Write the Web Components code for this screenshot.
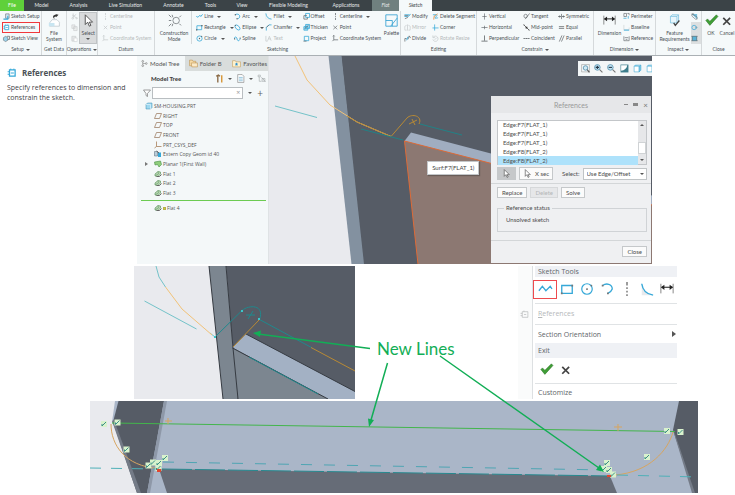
<!DOCTYPE html>
<html lang="en">
<head>
<meta charset="utf-8">
<title>Sketch references</title>
<style>
  body { margin: 0; background: #fff; color: #4c5257; font-family: "Open Sans", "Noto Sans", sans-serif; }
</style>
</head>
<body>
<cad-guide></cad-guide>
<script>
const B = '#35a8d8', G = '#5a6064', L = '#c4c8ca';
const st = (c, w = 1.6) => `fill="none" stroke="${c}" stroke-width="${w}"`;
const leaf = `<path d="M2 8L8 3l5 1v4l-5 5-6-1z" fill="#b9d8b4" stroke="#5b8f5c" stroke-width="1.3"/><path d="M5 13h6l4-4" ${st('#666', 2)}/><path d="M8 3l1 5-6 3" ${st('#5b8f5c', 1)}/>`;
const plane = `<path d="M5 3h10l-4 10H1z" ${st('#9b7b60', 1.5)}/>`;
const pages = `<path d="M2 2h7v8H2zM6 6h8v9H6z" fill="#eceeee" stroke="${L}" stroke-width="1.3"/>`;
const cursor = `<path d="M4 1v12l3-3 2 5 2-1-2-4h4z" fill="#fff" stroke="#555" stroke-width="1.2"/>`;
const ICONS = {
  setup: `<path d="M6 2h8v10H6z" fill="#d6edf7" stroke="${G}" stroke-width="1.3"/><path d="M1 14h10V6" ${st(B, 2.4)}/>`,
  refs: `<path d="M4 3h9v10H4z" fill="#fff" stroke="${B}" stroke-width="2"/><path d="M1 6h3M1 10h3M6 1v2M11 1v2M6 8h5" ${st(B)}/>`,
  view: `<path d="M1 6l5-3 5 3v6l-5 3-5-3z" fill="#9bd3ec" stroke="${G}" stroke-width="1.2"/><path d="M9 3h6v7h-4" ${st(G)}/>`,
  file: `<path d="M5 7h6l3 3v5H2v-4z" fill="#fff" stroke="#a9b5bb" stroke-width=".7"/><path d="M1 11h7v4H1z" fill="#c8e5f1"/><path d="M8 6C5 4 6 1 10 1L9 0l4 1-3 3V3C8 3 7 4 8 6z" fill="#333"/>`,
  cut: `<path d="M5 1v9M3 5l9 6M12 3L5 8" ${st(L)}/><circle cx="4" cy="12" r="2" ${st(L)}/><circle cx="13" cy="12" r="1.6" ${st(L)}/>`,
  copy: pages,
  paste: `<path d="M2 3h9v11H2z" fill="#e4e6e7" stroke="${L}" stroke-width="1.3"/><path d="M7 7h7v8H7z" fill="#fff" stroke="${L}"/>`,
  cursor,
  centerOff: `<path d="M8 0v5M8 7v2M8 11v5" ${st(L)}/>`,
  center: `<path d="M8 0v5M8 7v2M8 11v5" ${st(G)}/>`,
  pointOff: `<path d="M4 4l8 8M12 4l-8 8" ${st(L)}/>`,
  point: `<path d="M3 4l9 8M12 4l-9 8" ${st(G, 1.4)}/>`,
  csysOff: `<path d="M4 1v10h10M1 14l3-3M2 3l2-2 2 2" ${st(L)}/>`,
  csys: `<path d="M4 1v10h10M1 14l3-3M2 3l2-2 2 2" ${st(G)}/>`,
  construct: `<circle cx="10" cy="8" r="4" ${st(G, .8)}/><path d="M1 1l3 3M1 8h3M1 15l3-3M5 1l1 3M5 15l1-3M14 4l2-2M14 12l2 2" ${st(G, .9)}/>`,
  line: `<path d="M1 7c2 4 4 3 6 0s3-1 4 1l4-5" ${st(B, 2)}/>`,
  rect: `<path d="M2 4h11v9H2z" ${st(B, 1.8)}/><path d="M0 12h3v3H0zM12 2h3v3h-3z" fill="${G}"/>`,
  circle: `<circle cx="8" cy="8" r="6" ${st(B, 1.8)}/><circle cx="8" cy="8" r="1.5" fill="${G}"/><circle cx="13" cy="3" r="1.4" fill="${G}"/>`,
  arc: `<path d="M3 4c4-3 11-1 10 5-1 3-3 4-5 4" ${st(B, 2)}/><circle cx="3" cy="4" r="1.6" fill="${G}"/><circle cx="7" cy="13" r="1.6" fill="${G}"/>`,
  ellipse: `<ellipse cx="8" cy="8" rx="7" ry="4" transform="rotate(45 8 8)" ${st(B, 1.8)}/><circle cx="3" cy="3" r="1.4" fill="${G}"/>`,
  spline: `<path d="M1 9c0-6 5-6 6 0s6 5 7-1" ${st(B, 2)}/><circle cx="1.500" cy="9" r="1.5" fill="${G}"/><circle cx="14" cy="7" r="1.5" fill="${G}"/>`,
  fillet: `<path d="M2 1v13h12" ${st('#dde1e3', 1)}/><path d="M2 1c1 8 5 12 13 13" ${st(B, 1.8)}/>`,
  chamfer: `<path d="M3 15V8l6-6h6" ${st(B, 1.8)}/><path d="M3 8L9 2" ${st(G)}/>`,
  textOff: `<path d="M2 2v12h4M6 13l4-10 4 10M8 9h5" ${st(L)}/>`,
  offset: `<path d="M6 1h9v9H6z" ${st(B, 1.8)}/><path d="M9 6H2v8h8v-4" ${st(G)}/>`,
  thicken: `<path d="M6 1h9v9H6zM2 6h9v8H2z" fill="#a9dbf0" stroke="${B}" stroke-width="1.8"/><path d="M4 11l8-8" ${st(G)}/>`,
  project: `<path d="M3 3h10v10H3z" ${st(B, 1.8)}/><path d="M1 14h7" ${st(G)}/>`,
  palette: `<path d="M1 1h14v14H1zM1 8h8V15M7 15L15 5" ${st('#2f9fd2', 1)}/>`,
  modify: `<path d="M1 4h12M1 8h7c5 0 5-5 7-5" ${st(B, 1.8)}/><path d="M2 13l7-3M1 6h9" ${st(G)}/>`,
  mirrorOff: `<path d="M8 1v14M6 3c-6 1-4 6-4 11h4M10 3c6 1 4 6 4 11h-4" ${st(L)}/>`,
  divide: `<path d="M2 15V8h4M9 10l3-8 3 5" ${st(G)}/><path d="M6 12l3-8" ${st(B, 2)}/>`,
  del: `<path d="M4 15l1-8 8-5" ${st('#e58a3c', 2)}/><path d="M2 4h8M7 12l7-1M12 5l-5 6" ${st(B, 1.8)}/>`,
  corner: `<path d="M6 1v14M1 9h14" ${st(B, 1.7)}/>`,
  rotateOff: `<path d="M3 5a6 6 0 1 1-1 5M2 1v5h5M6 11l5-5" ${st(L)}/>`,
  vert: `<path d="M8 1v14M3 8h10" ${st(G, 1.4)}/>`,
  horiz: `<path d="M1 8h14M8 4v8" ${st(G, 1.4)}/>`,
  perp: `<path d="M8 1v12M1 14h14" ${st(G, 1.8)}/>`,
  tangent: `<circle cx="6" cy="7" r="4" ${st(G, 1.4)}/><path d="M5 14L15 1" ${st(G, 1.5)}/>`,
  mid: `<path d="M2 2l12 12" ${st('#333', 1.6)}/><path d="M6 6h4v4H6zM1 1h2v2H1zM13 13h2v2h-2z" fill="#333"/>`,
  coin: `<path d="M1 8h5M10 8h5" ${st(G, 1.8)}/><circle cx="8" cy="8" r="1.400" fill="${G}"/>`,
  sym: `<path d="M8 2v12M0 8h5M11 8h5" ${st(G, 1.5)}/><path d="M3 5l4 3-4 3zM13 5L9 8l4 3z" fill="${G}"/>`,
  equal: `<path d="M2 6h12M2 10h12" ${st(G, 1.7)}/>`,
  parallel: `<path d="M3 15L9 1M8 15l6-14" ${st(G, 1.6)}/>`,
  dim: `<path d="M1 2v11M15 2v11" ${st('#555', .8)}/><path d="M2 6h12" ${st('#222', 1.2)}/><path d="M5 3v6L1 6zM11 3v6l4-3z" fill="#222"/>`,
  perim: `<path d="M2 1h6v7H2zM10 1h4v4" ${st(G, 1.4)}/><path d="M1 12h7M12 7v6" ${st(B, 1.7)}/>`,
  base: `<path d="M2 2v11h12V8" ${st(L, 1.2)}/><path d="M2 14h12" ${st(B, 2)}/>`,
  refdim: `<path d="M2 3v10h12V3M4 6h8M6 10h4" ${st(G, 1.4)}/>`,
  feature: `<path d="M3 3h8v8H3zM3 3l2-2h8l-2 2M13 1v8l-2 2" fill="#e8f6fc" stroke="#68b9dc" stroke-width=".8"/><path d="M7 11l2 3 5-6" ${st('#444', 1.6)}/>`,
  shade: `<path d="M2 2h12v12z" fill="#7ec3df"/><path d="M2 2h5M2 2v5l8 7h4V9z" ${st(G, 1.2)}/>`,
  ends: `<circle cx="7" cy="8" r="5" ${st(B, 1.6)}/><path d="M10 8h5M12 5v6" ${st('#6f9fb7', 1.4)}/>`,
  loops: `<path d="M3 3h10v10H3z" fill="#5bb2d6" stroke="#48646f" stroke-width="1.500"/><path d="M1 3h2M13 3h2M1 13h2M13 13h2" ${st(G)}/>`,
  ok: `<path d="M1 8l2-2 3 3 8-8 2 2L6 14z" fill="#3f9e36" stroke="#2b6e28" stroke-width=".6"/>`,
  cancel: `<path d="M2 3l11 11M13 3L2 14" ${st('#444', 2.8)}/>`,
  tree: `<circle cx="4" cy="3" r="2" ${st('#777', 1.4)}/><circle cx="4" cy="13" r="2" ${st('#777', 1.4)}/><path d="M4 5v6M4 8h6" ${st('#777', 1.2)}/><circle cx="12" cy="8" r="2" ${st('#777', 1.4)}/>`,
  folder: `<path d="M1 2h5l1 2h5v8H1z" fill="#f8dca8" stroke="#b98c4a"/><path d="M4 7h11v7H5z" fill="#fbeac8" stroke="#b98c4a"/>`,
  fav: `<path d="M1 3h5l1 2h8v9H1z" fill="#fff3cf" stroke="#c09a55"/><path d="M8 6l1 2 2 .3-1.500 1.500.5 2.200-2-1-2 1 .5-2.200L5 8.300 7 8z" fill="#2b8fd0"/>`,
  tools: `<path d="M2 4l4-2 3 2M5 3v12" ${st('#8a6a45', 2.4)}/><path d="M12 2v5M12 7v8" ${st('#d5922f', 2.4)}/>`,
  sheet: `<path d="M3 1h8l3 3v11H3z" fill="#fff" stroke="#777"/><path d="M5 6h7M5 9h7M5 12h7" ${st('#4b9cc4', 1)}/>`,
  treeoff: `<path d="M2 2h4v3H2zM4 5v8h4M9 8h5v5H9z" ${st('#a9aeb0', 1.2)}/><path d="M8 6l7 8" ${st('#a9aeb0')}/>`,
  funnel: `<path d="M1 2h14L9 9v6l-3-2V9z" fill="#fff" stroke="#777" stroke-width="1.400"/>`,
  part: `<path d="M2 5l3-3h9v9l-3 3H2z" fill="#9ed8f0" stroke="#3a8db3"/><path d="M2 5h9v9" ${st('#e8f7fd', 1.2)}/>`,
  plane, leaf,
  tcsys: `<path d="M5 1v10h10M1 14l4-3" ${st('#a47a52', 1.5)}/>`,
  extern: `<path d="M1 3h6v9H1z" fill="#b9cdd8" stroke="#567"/><path d="M8 5h6v9H8z" fill="#35a8d8"/><path d="M5 2l5 4" ${st('#444')}/>`,
  planar: `<path d="M1 4l12-2 2 7-5 5-3-5-5 1z" fill="#8fce7c" stroke="#468d45" stroke-width="1.2"/>`,
  zoomfit: `<path d="M1 1h14v13H1z" ${st('#999', 1)}/><circle cx="8" cy="7" r="4" fill="#cfe9f5" stroke="#4f8ba8" stroke-width="1.400"/><path d="M11 10l4 5" ${st('#555', 2)}/>`,
  zoomin: `<circle cx="6" cy="6" r="5" fill="#bfe2f2" stroke="#4f8ba8" stroke-width="1.3"/><path d="M10 10l5 5" ${st('#777', 2)}/><path d="M3 6h6M6 3v6" ${st('#234', 1.8)}/>`,
  zoomout: `<circle cx="6" cy="6" r="5" fill="#bfe2f2" stroke="#4f8ba8" stroke-width="1.3"/><path d="M10 10l5 5" ${st('#777', 2)}/><path d="M3 6h6" ${st('#234', 1.8)}/>`,
  repaint: `<path d="M1 1h14v14H1z" fill="#3d7d8c"/><path d="M2 2h11C12 8 8 11 2 12z" fill="#fff"/>`,
  cube: `<path d="M2 4h9v10H2z" fill="#fff" stroke="#3aa5d3"/><path d="M2 4l2-2h10v9l-3 3V4l3-2" fill="#7cc9e8" stroke="#3aa5d3"/>`,
  zig: `<path d="M1 10l4-5 4 5 5-5 2 3" ${st('#35a8d8', 1.5)}/>`,
  mrect: `<path d="M2 4h12v9H2z" ${st(B, 1.500)}/><path d="M1 12h2v2H1zM13 3h2v2h-2z" fill="#777"/>`,
  mcircle: `<circle cx="8" cy="8" r="6" ${st(B, 1.400)}/><circle cx="8" cy="8" r="1" fill="#555"/><circle cx="13" cy="4" r="1" fill="#777"/>`,
  marc: `<path d="M3 4c4-3 11-2 11 4-1 3-3 4-5 5" ${st(B, 1.500)}/><path d="M2 3h2v2H2zM8 12h2v2H8z" fill="#777"/>`,
  mcenter: `<path d="M8 0v4M8 6v2M8 10v2M8 14v2" ${st('#444', 1.2)}/>`,
  mfillet: `<path d="M2 2v13h12C7 13 3 9 2 2z" fill="#e8eaed"/><path d="M2 2c1 7 5 12 13 13" ${st(B, 1.600)}/>`,
  greyref: `<path d="M4 3h10v10H4zM1 6h3M1 10h3M7 1v2M7 8h4" ${st('#b3b6b8', 1.2)}/>`,
};

const define = (name, html, init) => customElements.define(name, class extends HTMLElement {
  connectedCallback() {
    if (this.shadowRoot) return;
    const root = this.attachShadow({ mode: 'open' });
    const t = document.createElement('template');
    t.innerHTML = typeof html === 'function' ? html(this) : html;
    root.append(t.content.cloneNode(true));
    if (init) init(this, root);
  }
});
const BTN = `button{font:inherit;color:inherit;background:none;border:0;padding:0;margin:0;text-align:left;white-space:nowrap}`;

define('cad-icon', el => `<style>:host{display:block;flex:none;width:var(--size,7px);height:var(--size,7px)}svg{display:block;width:100%;height:100%;overflow:visible}</style>
<svg viewBox="0 0 16 16" aria-hidden="true">${ICONS[el.getAttribute('name')]}</svg>`);

define('cad-caret', `<style>:host{display:block;flex:none;border:solid transparent;border-width:2px 2px 0;border-top-color:#555;height:0;width:0}</style>`);

define('cad-tool', el => `<style>:host{display:flex;align-items:center;min-width:0;height:11px}${BTN}
button{display:flex;align-items:center;gap:1px;height:11px;line-height:11px}
cad-caret{margin-left:3px}
:host([off]){color:#b5b9bb}
:host([marked]) button{outline:1px solid #f0383c;width:38px;outline-offset:-1px;padding-left:1px;margin-left:-1px}
:host([on]){background:#dcdfe0}</style>
<button type="button" ${el.hasAttribute('off') ? 'disabled' : ''} aria-label="${el.getAttribute('tip') || ''}"><cad-icon name="${el.getAttribute('icon')}"></cad-icon><span><slot></slot></span>${el.hasAttribute('menu') ? '<cad-caret></cad-caret>' : ''}</button>`,
(el, r) => { const b = r.querySelector('button'); if (!b.getAttribute('aria-label')) b.removeAttribute('aria-label'); });

define('cad-big', el => `<style>:host{display:block;--size:13px}${BTN}
button{display:flex;flex-direction:column;align-items:center;width:100%;height:32px;margin-top:1px;padding-top:2px;line-height:6px;text-align:center;white-space:normal}
.glyph{display:grid;place-items:center;height:13px;margin-bottom:3px}
:host([on]) button{background:#d9dbdc;outline:1px solid #bfc3c5;outline-offset:-1px}
cad-caret{margin-top:2px}</style>
<button type="button"><span class="glyph"><cad-icon name="${el.getAttribute('icon')}"></cad-icon></span><span><slot></slot></span>${el.hasAttribute('menu') ? '<cad-caret></cad-caret>' : ''}</button>`);

define('cad-group', el => `<style>:host{display:flex;flex-direction:column;min-width:0;border-right:1px solid #d5d9db;box-sizing:border-box}
:host(:last-child){border-right:0}
.body{display:grid;grid-template-columns:${el.getAttribute('cols')};height:33px;padding-left:${el.getAttribute('pad') || 2}px}
.name{display:flex;justify-content:center;align-items:center;gap:2px;height:11px;line-height:11px}
::slotted(div){min-width:0}
::slotted(.rule){border-left:1px solid #d5d9db;padding-left:4px}</style>
<div class="body"><slot></slot></div><div class="name">${el.getAttribute('name')}${el.hasAttribute('menu') ? '<cad-caret></cad-caret>' : ''}</div>`);

const T = (icon, text, flags = '') => `<cad-tool icon="${icon}" ${flags}>${text}</cad-tool>`;
define('cad-ribbon', `<style>
:host{display:block;font-family:Lato,"Open Sans",sans-serif;font-size:5px;border-bottom:1px solid #aab0b4;overflow:hidden}
nav{display:grid;grid-template-columns:24fr 35fr 39fr 55fr 41fr 33fr 30fr 63fr 52fr 27fr 33fr 303fr;background:#3b4347}
${BTN}
nav button{color:#e6e9ea;text-align:center;height:11px;line-height:11px}
nav .file{background:#5fd03a;color:#fff}
nav .flat{background:#70807f;font-style:italic}
nav .sel{background:#f5f9fa;color:#3b4347;font-style:italic}
main{display:grid;grid-template-columns:42fr 25fr 31fr 57fr 246fr 76fr 117fr 62fr 46fr 33fr;background:#f5f9fa}
main>*{min-width:0}
</style>
<nav><button class="file">File</button><button>Model</button><button>Analysis</button><button>Live Simulation</button><button>Annotate</button><button>Tools</button><button>View</button><button>Flexible Modeling</button><button>Applications</button><button class="flat">Flat</button><button class="sel">Sketch</button></nav>
<main>
<cad-group name="Setup" menu cols="1fr" pad="3"><div>${T('setup', 'Sketch Setup')}${T('refs', 'References', 'marked')}${T('view', 'Sketch View')}</div></cad-group>
<cad-group name="Get Data" cols="1fr" pad="0"><cad-big icon="file">File<br>System</cad-big></cad-group>
<cad-group name="Operations" menu cols="8fr 17fr" pad="4"><div>${T('cut', '', 'off tip="Cut"')}${T('copy', '', 'off tip="Copy"')}${T('paste', '', 'off tip="Paste"')}</div><cad-big icon="cursor" on menu>Select</cad-big></cad-group>
<cad-group name="Datum" cols="1fr" pad="4"><div>${T('centerOff', 'Centerline', 'off')}${T('pointOff', 'Point', 'off')}${T('csysOff', 'Coordinate System', 'off')}</div></cad-group>
<cad-group name="Sketching" cols="34fr 43fr 31fr 37fr 29fr 51fr 17fr"><cad-big icon="construct">Construction<br>Mode</cad-big>
<div class="rule">${T('line', 'Line', 'menu')}${T('rect', 'Rectangle', 'menu')}${T('circle', 'Circle', 'menu')}</div>
<div>${T('arc', 'Arc', 'menu')}${T('ellipse', 'Ellipse', 'menu')}${T('spline', 'Spline')}</div>
<div>${T('fillet', 'Fillet', 'menu')}${T('chamfer', 'Chamfer', 'menu')}${T('textOff', 'Text', 'off')}</div>
<div>${T('offset', 'Offset')}${T('thicken', 'Thicken')}${T('project', 'Project')}</div>
<div>${T('center', 'Centerline', 'menu')}${T('point', 'Point')}${T('csys', 'Coordinate System')}</div>
<cad-big icon="palette">Palette</cad-big></cad-group>
<cad-group name="Editing" cols="28fr 44fr" pad="3"><div>${T('modify', 'Modify')}${T('mirrorOff', 'Mirror', 'off')}${T('divide', 'Divide')}</div><div>${T('del', 'Delete Segment')}${T('corner', 'Corner')}${T('rotateOff', 'Rotate Resize', 'off')}</div></cad-group>
<cad-group name="Constrain" menu cols="42fr 35fr 35fr" pad="4"><div>${T('vert', 'Vertical')}${T('horiz', 'Horizontal')}${T('perp', 'Perpendicular')}</div><div>${T('tangent', 'Tangent')}${T('mid', 'Mid-point')}${T('coin', 'Coincident')}</div><div>${T('sym', 'Symmetric')}${T('equal', 'Equal')}${T('parallel', 'Parallel')}</div></cad-group>
<cad-group name="Dimension" menu cols="27fr 32fr"><cad-big icon="dim">Dimension</cad-big><div>${T('perim', 'Perimeter')}${T('base', 'Baseline')}${T('refdim', 'Reference')}</div></cad-group>
<cad-group name="Inspect" menu cols="33fr 10fr"><cad-big icon="feature">Feature<br>Requirements</cad-big><div>${T('shade', '', 'tip="Shade closed loops"')}${T('ends', '', 'on tip="Highlight open ends"')}${T('loops', '', 'on tip="Overlapping geometry"')}</div></cad-group>
<cad-group name="Close" cols="1fr 16px" pad="1"><cad-big icon="ok">OK</cad-big><cad-big icon="cancel" style="--size:10px">Cancel</cad-big></cad-group>
</main>`);

define('cad-help', `<style>:host{display:block;padding:12px 0 0 7px;font-size:7px;line-height:10px}
h2{display:flex;align-items:center;gap:5px;margin:0 0 5px;font-size:8px;line-height:10px;font-weight:700;--size:10px}
p{margin:0;color:#3f4448}</style>
<h2><cad-icon name="refs"></cad-icon>References</h2><p>Specify references to dimension and<br>constrain the sketch.</p>`);

define('tree-row', el => `<style>:host{display:flex;align-items:center;gap:1px;padding-left:17px;position:relative;--size:8px}
:host([root]){padding-left:8px}
span{white-space:nowrap}.open{position:absolute;left:8px;border:solid transparent;border-width:2px 0 2px 3px;border-left-color:#777}
.dot{width:3px;height:3px;background:#d5cf35;outline:1px solid #b5b04a;outline-offset:-1px}</style>
${el.hasAttribute('closed') ? '<i class="open"></i>' : ''}<cad-icon name="${el.getAttribute('icon')}"></cad-icon>${el.hasAttribute('fresh') ? '<i class="dot"></i>' : ''}<span><slot></slot></span>`);

define('model-tree', `<style>
:host{display:flex;flex-direction:column;background:#f4f8f9;font-family:"Open Sans",sans-serif;font-size:5px;color:#555;box-sizing:border-box;border-right:1px solid #dfe3e5}
${BTN}
.tabs{display:grid;grid-template-columns:48fr 44fr 40fr;background:#d9dddc}
.tabs button{display:flex;align-items:center;gap:2px;height:15px;padding-left:4px;font-size:6px;overflow:hidden;font-family:Lato,sans-serif}
.tabs .on{background:#f4f8f9}
.head{display:flex;align-items:center;height:15px;padding:0 2px 0 14px;font-size:6px;font-weight:700;font-family:Lato,sans-serif;--size:9px;color:#444;gap:4px}
.head b{flex:1}
.find{display:flex;align-items:center;height:13px;gap:1px;padding:0 5px 0 6px;--size:8px}
.box{display:flex;flex:1;align-items:center;background:#fff;border:1px solid #b9bec1;height:10px}
input{flex:1;min-width:0;border:0;padding:0;height:9px;font-size:5px;background:none;outline:0}
.box button{width:8px;text-align:center;color:#999;font-size:7px;line-height:8px}
.find cad-caret{margin:0 4px}
.plus{font-size:10px;line-height:10px;color:#666}
.rows{display:grid;grid-auto-rows:1fr;height:97px;margin-top:2px}
hr{box-sizing:border-box;border:0;height:1px;background:#6ccb52;margin:2px 2px 2px 4px}
.last{display:grid;height:10px}
</style>
<div class="tabs"><button class="on"><cad-icon name="tree"></cad-icon>Model Tree</button><button><cad-icon name="folder" style="--size:9px"></cad-icon>Folder B</button><button><cad-icon name="fav" style="--size:9px"></cad-icon>Favorites</button></div>
<div class="head"><b>Model Tree</b><cad-icon name="tools"></cad-icon><cad-caret></cad-caret><cad-icon name="sheet"></cad-icon><cad-caret></cad-caret><cad-icon name="treeoff"></cad-icon></div>
<div class="find"><cad-icon name="funnel"></cad-icon><div class="box"><input type="text" aria-label="Filter tree"><button aria-label="Clear">×</button></div><cad-caret></cad-caret><button class="plus">+</button></div>
<div class="rows"><tree-row root icon="part">SM-HOUSING.PRT</tree-row><tree-row icon="plane">RIGHT</tree-row><tree-row icon="plane">TOP</tree-row><tree-row icon="plane">FRONT</tree-row><tree-row icon="tcsys">PRT_CSYS_DEF</tree-row><tree-row icon="extern">Extern Copy Geom id 40</tree-row><tree-row icon="planar" closed>Planar 1(First Wall)</tree-row><tree-row icon="leaf">Flat 1</tree-row><tree-row icon="leaf">Flat 2</tree-row><tree-row icon="leaf">Flat 3</tree-row></div>
<hr><div class="last"><tree-row icon="leaf" fresh>Flat 4</tree-row></div>`);

define('references-dialog', `<style>
:host{display:block;box-sizing:border-box;background:#eff0f2;font-family:Lato,"Open Sans",sans-serif;font-size:6px;line-height:8px;color:#4d4d4d}
${BTN}
header{display:grid;grid-template-columns:1fr auto 1fr;align-items:center;height:17px;background:#e6e7e9;color:#999;font-size:7px}
header h3{margin:0;font:inherit;grid-column:2}
header div{display:flex;justify-content:flex-end;align-items:center;gap:5px;padding-right:3px;color:#777}
header i{width:5px;height:3px;border:1px solid #888;border-top-width:2px;box-sizing:border-box}
header .min{height:1px;width:4px;border:0;background:#888}
header button{font-size:8px;line-height:8px}
.pad{padding:0 4px 0 6px}
.list{display:flex;margin-top:7px;border:1px solid #c3c6c9;height:43px;background:#fff}
ul{flex:1;list-style:none;margin:-1px 0 0;padding:0}
li{height:9px;line-height:9px;padding-left:5px}
li[aria-selected]{background:#aee2fb}
.bar{display:flex;flex-direction:column;width:8px;background:#e6e7e9;align-items:center;justify-content:space-between}
.bar b{align-self:stretch;flex:1;margin:13px 0 2px;background:#fff;border:1px solid #d0d3d5;box-sizing:border-box}
.bar cad-caret{margin:3px 0}.bar .up{transform:rotate(180deg)}
.row{display:flex;align-items:center;gap:3px;margin-top:3px}
.row button,.close{display:flex;align-items:center;justify-content:center;gap:3px;box-sizing:border-box;height:11px;padding:0 4px;border:1px solid #c5c8ca;background:#fbfbfb;line-height:9px}
.pick{margin-top:2px}.pick button{height:13px}.pick .arrow{background:#c6c8ca;width:19px;--size:9px}.pick .x{width:34px;--size:9px}
.pick label{margin-left:6px}
.combo{display:flex;flex:1;position:relative;align-items:center}
select{appearance:none;font:inherit;color:inherit;width:100%;height:12px;margin:0;padding:0 0 0 3px;border:1px solid #c0c4c6;border-radius:0;background:#fff;line-height:9px}
.combo cad-caret{position:absolute;right:3px}
hr{border:0;border-top:1px solid #d3d6d8;margin:3px 0 0}
.row button:disabled{background:#e6e7e9;color:#b4b6b8;border-color:#d6d8da}
fieldset{margin:6px 0 0;padding:4px 8px 7px;border:1px solid #d0d3d6;min-width:0}
legend{padding:0 2px;margin-left:-2px;line-height:8px}
.foot{display:flex;justify-content:flex-end;padding-top:5px;padding-bottom:5px}
</style>
<header><h3>References</h3><div><i class="min"></i><i></i><button aria-label="Close dialog">×</button></div></header>
<div class="pad"><div class="list"><ul role="listbox" aria-label="References"><li role="option">Edge:F7(FLAT_1)</li><li role="option">Edge:F7(FLAT_1)</li><li role="option">Edge:F7(FLAT_1)</li><li role="option">Edge:F8(FLAT_2)</li><li role="option" aria-selected="true">Edge:F8(FLAT_2)</li></ul><div class="bar"><cad-caret class="up"></cad-caret><b></b><cad-caret></cad-caret></div></div>
<div class="row pick"><button class="arrow" aria-label="Pick"><cad-icon name="cursor"></cad-icon></button><button class="x"><cad-icon name="cursor"></cad-icon>X sec</button><label for="mode">Select:</label><span class="combo"><select id="mode"><option>Use Edge/Offset</option></select><cad-caret></cad-caret></span></div></div>
<hr><div class="pad"><div class="row"><button>Replace</button><button disabled>Delete</button><button>Solve</button></div>
<fieldset><legend>Reference status</legend>Unsolved sketch</fieldset></div>
<hr style="margin-top:8px"><div class="pad foot"><button class="close">Close</button></div>`);

define('part-view', `<style>
:host{display:block;position:relative;overflow:hidden;min-width:0}
svg{display:block;width:100%;height:100%}
.bar{position:absolute;right:0;top:5px;width:71px;height:15px;display:flex;align-items:center;gap:4px;padding-left:3px;background:#f3f6f7;overflow:hidden;--size:9px}
${BTN}
.tip{position:absolute;left:41.300%;top:50.500%;background:#fff;border:1px solid #c3c6c9;box-sizing:border-box;padding:0 4px;font:6px/12px Lato,sans-serif;color:#444;box-shadow:1px 1px 1px #3336;white-space:nowrap}
references-dialog{position:absolute;right:1px;top:40px;width:160px;height:167px}
</style>
<svg viewBox="269 56 383 208" preserveAspectRatio="none" aria-hidden="true">
<path fill="#e9eaee" d="M269 56h383v208H269z"/><path fill="#565c66" d="M341 56h311v208H363z"/><path fill="#8391a0" d="M328.500 56h13L364 264h-12.500z"/>
<path fill="#8c7872" d="M404.500 141L652 205v59H418z"/><path fill="#a0adc0" d="M404.500 141l6.500-8.500L652 195.500V205z"/>
<path d="M418 264l-13.500-123L652 205" fill="none" stroke="#dd6b38"/>
<path d="M295 56l12 24 23 25 27 17 34 14.500" fill="none" stroke="#f2c277"/><path d="M347 116l10 6 34 14.500 16-18.500c5-5 16-2 12 6M409 124l8-4M412 119l3 6" fill="none" stroke="#b88a35"/>
<path d="M275 106l42 11.500" stroke="#74c3c9"/><path d="M361 129l42 11M420 124l42 11" stroke="#218286"/></svg>
<div class="bar"><button aria-label="Refit"><cad-icon name="zoomfit"></cad-icon></button><button aria-label="Zoom in"><cad-icon name="zoomin"></cad-icon></button><button aria-label="Zoom out"><cad-icon name="zoomout"></cad-icon></button><button aria-label="Repaint"><cad-icon name="repaint"></cad-icon></button><button aria-label="Display style"><cad-icon name="cube"></cad-icon></button><button aria-label="Views"><cad-icon name="cube"></cad-icon></button></div>
<div class="tip">Surf:F7(FLAT_1)</div>
<references-dialog></references-dialog>`);

define('detail-view', `<style>:host{display:block;min-width:0}svg{display:block;width:100%;height:100%}</style>
<svg viewBox="134 266 221 133" preserveAspectRatio="none" role="img" aria-label="Sketch lines at the corner">
<path fill="#e9eaee" d="M134 266h221v133H134z"/><path fill="#565c66" d="M226 266h129v133H237z"/><path fill="#7c8690" d="M209 266h17l11.500 133H223z"/>
<path fill="#7c8690" d="M232.500 348L328 399h-90.500z"/><path fill="#a3b1c4" d="M232.500 347.500L246 334l109 57.500v7.500h-27z"/>
<path d="M209 266l14 133M226 266l7 82 5 51M246 334l109 57.500M232.500 348L328 399" fill="none" stroke="#363b42"/>
<path d="M156 266l3 11 6.500 10M144.500 301l52 28M210 333l5 4" fill="none" stroke="#74c3c9"/><path d="M165.500 287L182 309l30 26" fill="none" stroke="#f2c277"/>
<path d="M215 337l27-26.500c7-6 23-6 17.500 9l52 28M246 315h9M248 319l5-8M249 357l69 37" fill="none" stroke="#1f898d"/>
<path d="M259.500 319.500L233 347M311 347.500l44 23.500" stroke="#b88a35"/><path d="M258 318h2v2h-2zM241 310h2v2h-2zM214 336h2v2h-2z" fill="#3cc5c9"/></svg>`);

define('sketch-menu', `<style>
:host{display:grid;grid-template-columns:15fr 144fr;min-width:0;font-size:7px;line-height:11px;color:#606569}
${BTN}
.gutter{background:#fafbfb;border-right:1px solid #dde0e2;padding:44px 0 0 2px;--size:9px}
.main{display:flex;flex-direction:column;padding-left:2px;min-width:0}
h4{margin:0;padding-left:3px;background:#eff1f5;font:inherit;height:11px;line-height:11px}
.tools{display:grid;grid-template-columns:repeat(7,20fr);height:24px;align-items:center;margin-left:-2px;--size:14px}
.tools button{display:flex;justify-content:center;align-items:center;height:17px}
.tools .on{border:1px solid #ee4a4e;box-sizing:border-box;width:24px;height:19px}
hr{box-sizing:border-box;border:0;height:1px;background:#e0e3e5;margin:2px 0 0;align-self:stretch}
.item{display:flex;justify-content:space-between;align-items:center;height:18px;padding:0 1px 0 3px}
.item i{border:solid transparent;border-width:3px 0 3px 4px;border-left-color:#555}
.item:disabled{color:#b5b8ba}
.item.tail{height:14px;align-items:flex-end}
h4.exit{height:15px;line-height:15px}
.end{display:flex;align-items:center;gap:8px;height:23px;padding-left:5px;--size:13px}
</style>
<div class="gutter"><cad-icon name="greyref"></cad-icon></div>
<div class="main"><h4>Sketch Tools</h4>
<div class="tools"><button class="on" aria-label="Line chain"><cad-icon name="zig"></cad-icon></button><button aria-label="Rectangle"><cad-icon name="mrect"></cad-icon></button><button aria-label="Circle"><cad-icon name="mcircle"></cad-icon></button><button aria-label="Arc"><cad-icon name="marc"></cad-icon></button><button aria-label="Centerline"><cad-icon name="mcenter"></cad-icon></button><button aria-label="Fillet"><cad-icon name="mfillet"></cad-icon></button><button aria-label="Dimension"><cad-icon name="dim"></cad-icon></button></div>
<hr><button class="item" disabled><span><u>R</u>eferences</span></button><hr><button class="item">Section Orientation<i></i></button>
<h4 class="exit">Exit</h4><div class="end"><button aria-label="OK"><cad-icon name="ok"></cad-icon></button><button aria-label="Cancel"><cad-icon name="cancel" style="--size:10px"></cad-icon></button></div><hr><button class="item tail">Customize</button></div>`);

const badge = ([x, y]) => `<g transform="translate(${x} ${y})"><path d="M-3-3h6v6h-6z" fill="#d9f2cd"/><path d="M-2 2l4-4M-2 0v2" stroke="#3c8f86" fill="none"/></g>`;
const marks = [[104, 424], [117.5, 422.500], [126.500, 449.500], [148.500, 465.500], [153, 462.500], [159, 463], [165, 458], [158.500, 468], [667, 431], [680.500, 432], [647, 457], [607, 463], [604, 469], [609, 470], [613, 474.500]];
define('long-view', `<style>:host{display:block;min-width:0}svg{display:block;width:100%;height:100%}</style>
<svg viewBox="90 401 608 92" preserveAspectRatio="none" role="img" aria-label="Sketch along the full wall">
<path fill="#e9eaee" d="M90 401h608v92H90z"/><path fill="#aab6c8" d="M115 401h583v92H147l-35-71z"/><path fill="#e9eaee" d="M90 422h22l25 71H90z"/>
<path fill="#565c66" d="M118.500 401H164l-17 92h-10l-24-71z"/><path fill="#747b87" d="M112 421l2-1 27 73h-4z"/><path fill="#8e98a8" d="M164 401h3l-17 92h-3z"/>
<path fill="#666c77" d="M159 469l451 7 7 17H167z"/><path fill="#565c66" d="M679 401h19v92h-4l-21-63z"/><path fill="#747b87" d="M675 434l20 59h-3l-19-63z"/>
<path d="M112 423l563 8.500" stroke="#43b54c"/>
<path d="M111 424c0 21 14 42 47 44.500M673 432c-5 18-23 40-58 43M168 418v6M165 421h7M618 424v7M614 427h8" fill="none" stroke="#d7a560"/>
<path d="M90 468l68 1M617 475l81 2" stroke="#4fb0b8" stroke-dasharray="11 10"/><path d="M163 462l442 8" stroke="#4fa5b3" stroke-dasharray="11 12"/>
<path d="M162 469l448 7" stroke="#27898f" stroke-dasharray="30 3"/>
${marks.map(badge).join('')}
<path d="M157 469h4v3h-4zM607 475h4v2h-4z" fill="#e2452f"/></svg>`);

define('callout-arrows', `<style>:host{display:block;position:absolute;inset:0;pointer-events:none}svg{display:block;width:100%;height:100%}</style>
<svg viewBox="0 0 735 495" preserveAspectRatio="none" aria-hidden="true"><g stroke="#12ae56" stroke-width="1.500"><path d="M370 348.500L258 334M387.500 363L371 420M440 356l159 112"/></g>
<path fill="#12ae56" d="M253 333l8-2.500-1 6.500zM369 427l-1-8.500 6 1.500zM604 472l-8-2 4-5.500z"/></svg>`);

define('cad-guide', `<style>
:host{display:block;position:relative;padding-bottom:2px}
.top{display:grid;grid-template-columns:137fr 132fr 383fr 83fr}
.top>*{min-height:208px;box-sizing:border-box}
.mid{display:grid;grid-template-columns:134fr 221fr 22fr 141fr 159fr 58fr;margin:2px 0}
.mid>*{min-height:133px;min-width:0}
detail-view{grid-column:2;height:133px}
.call{grid-column:4;display:flex;align-items:center;height:133px;box-sizing:border-box;padding-top:32px;font:17px/22px Lato,sans-serif;color:#12ae56;white-space:nowrap}
.low{display:grid;grid-template-columns:90fr 608fr 37fr}
long-view{grid-column:2;height:92px}
part-view{height:208px}
</style>
<cad-ribbon></cad-ribbon>
<div class="top"><cad-help></cad-help><model-tree></model-tree><part-view></part-view></div>
<div class="mid"><detail-view></detail-view><div class="call">New Lines</div><sketch-menu></sketch-menu></div>
<div class="low"><long-view></long-view></div>
<callout-arrows></callout-arrows>`);
</script>
</body>
</html>
